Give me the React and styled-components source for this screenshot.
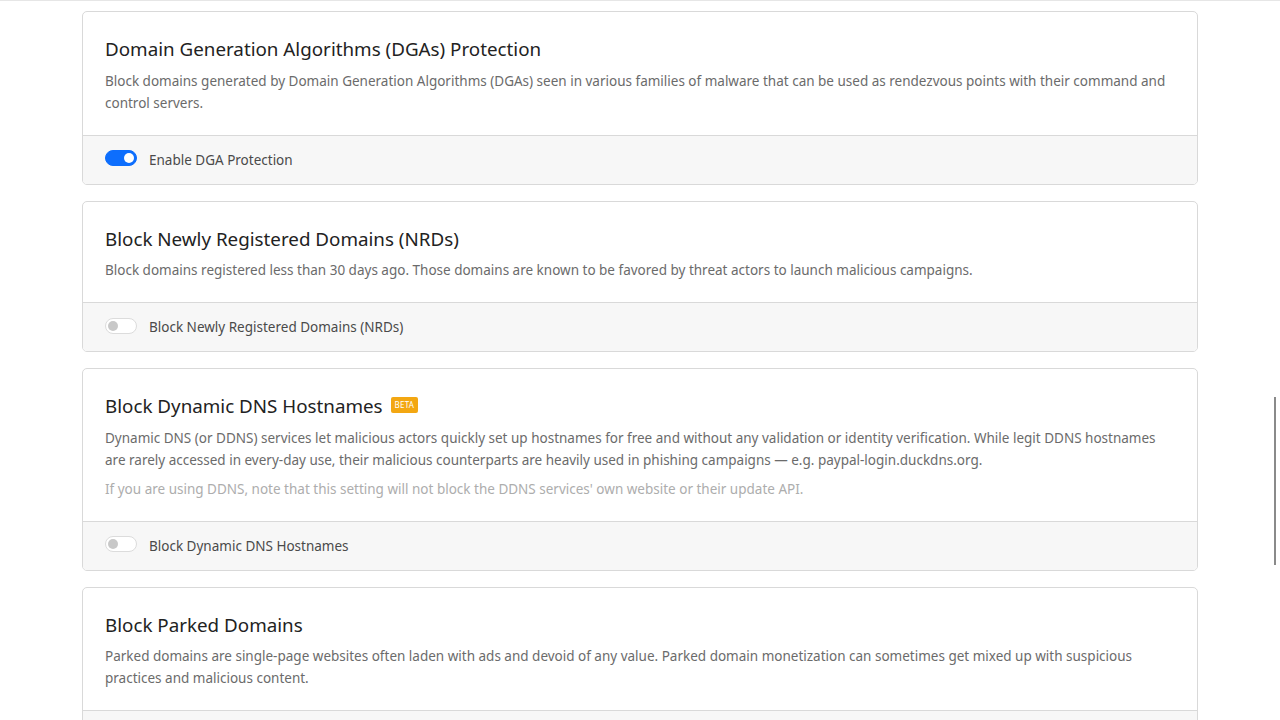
import React, { useState } from "react";
import styled, { createGlobalStyle } from "styled-components";

const GlobalStyle = createGlobalStyle`
  html, body {
    margin: 0;
    padding: 0;
    background: #fff;
    overflow: hidden;
    height: 720px;
  }
  body {
    font-family: "Noto Sans", "Open Sans", sans-serif;
    color: #212529;
  }
`;

const Page = styled.div`
  border-top: 1px solid #e6e6e6;
  padding: 10px 82px 0 82px;
  display: flex;
  flex-direction: column;
  gap: 16px;
`;

const Card = styled.section`
  border: 1px solid #d9d9d9;
  border-radius: 5px;
  background: #fff;
  overflow: hidden;
`;

const Body = styled.div`
  padding: 23px 22px 21px;
  border-bottom: 1px solid #d9d9d9;
`;

const Title = styled.h2`
  margin: 0 0 6.5px;
  font-size: 18.8px;
  font-weight: 400;
  line-height: 28px;
  color: #222;
  display: flex;
  align-items: center;
  gap: 8px;
`;

const Badge = styled.span`
  display: inline-flex;
  align-items: center;
  justify-content: center;
  background: #f3a712;
  color: #fff;
  font-size: 8px;
  line-height: 1;
  height: 16px;
  padding: 0 4px;
  border-radius: 2px;
  letter-spacing: 0.2px;
  margin-top: -2px;
`;

const Text = styled.p`
  margin: 0;
  font-size: 13.5px;
  line-height: 22px;
  color: ${(p) => (p.muted ? "#adadad" : "#6b6b6b")};
  & + & {
    margin-top: 7px;
  }
`;

const Footer = styled.label`
  display: flex;
  align-items: center;
  gap: 12px;
  height: 48px;
  padding: 0 22px;
  background: #f7f7f7;
  font-size: 13.5px;
  color: #4a4a4a;
  cursor: pointer;
`;

const Switch = styled.span`
  position: relative;
  width: 32px;
  height: 16px;
  border-radius: 8px;
  box-sizing: border-box;
  background: ${(p) => (p.on ? "#0d6efd" : "#fff")};
  border: 1px solid ${(p) => (p.on ? "#0d6efd" : "#dcdcdc")};
  margin-top: -3px;
  flex-shrink: 0;
  &::after {
    content: "";
    position: absolute;
    top: 2px;
    left: ${(p) => (p.on ? "18px" : "2px")};
    width: 10px;
    height: 10px;
    border-radius: 50%;
    background: ${(p) => (p.on ? "#fff" : "#c8c8c8")};
  }
`;

const ScrollThumb = styled.div`
  position: fixed;
  right: 4px;
  top: 397px;
  width: 2px;
  height: 168px;
  background: #8a8a8a;
`;

const cards = [
  {
    title: "Domain Generation Algorithms (DGAs) Protection",
    text: [
      "Block domains generated by Domain Generation Algorithms (DGAs) seen in various families of malware that can be used as rendezvous points with their command and control servers.",
    ],
    label: "Enable DGA Protection",
    on: true,
  },
  {
    title: "Block Newly Registered Domains (NRDs)",
    text: [
      "Block domains registered less than 30 days ago. Those domains are known to be favored by threat actors to launch malicious campaigns.",
    ],
    label: "Block Newly Registered Domains (NRDs)",
    on: false,
  },
  {
    title: "Block Dynamic DNS Hostnames",
    beta: true,
    text: [
      "Dynamic DNS (or DDNS) services let malicious actors quickly set up hostnames for free and without any validation or identity verification. While legit DDNS hostnames are rarely accessed in every-day use, their malicious counterparts are heavily used in phishing campaigns — e.g. paypal-login.duckdns.org.",
    ],
    note: "If you are using DDNS, note that this setting will not block the DDNS services' own website or their update API.",
    label: "Block Dynamic DNS Hostnames",
    on: false,
  },
  {
    title: "Block Parked Domains",
    text: [
      "Parked domains are single-page websites often laden with ads and devoid of any value. Parked domain monetization can sometimes get mixed up with suspicious practices and malicious content.",
    ],
    label: "Block Parked Domains",
    on: false,
  },
];

const SettingCard = ({ item }) => {
  const [on, setOn] = useState(item.on);
  return (
    <Card>
      <Body>
        <Title>
          {item.title}
          {item.beta && <Badge>BETA</Badge>}
        </Title>
        {item.text.map((t) => (
          <Text key={t}>{t}</Text>
        ))}
        {item.note && <Text muted>{item.note}</Text>}
      </Body>
      <Footer onClick={() => setOn(!on)}>
        <Switch on={on} />
        {item.label}
      </Footer>
    </Card>
  );
};

const App = () => (
  <>
    <GlobalStyle />
    <Page>
      {cards.map((c) => (
        <SettingCard key={c.title} item={c} />
      ))}
    </Page>
    <ScrollThumb />
  </>
);

export default App;
